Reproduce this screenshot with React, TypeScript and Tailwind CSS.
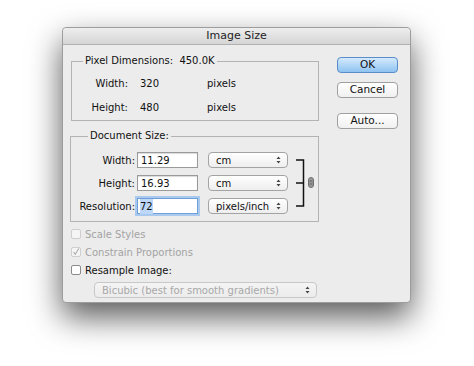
const font = { fontFamily: '"DejaVu Sans", "Liberation Sans", sans-serif' };

function Arrows() {
  return (
    <svg width="5" height="8" viewBox="0 0 5 8" className="shrink-0">
      <path d="M2.5 0.5 L4.5 3 L0.5 3 Z" fill="#444" />
      <path d="M2.5 7.5 L4.5 5 L0.5 5 Z" fill="#444" />
    </svg>
  );
}

function Select({ label, className = "", disabled = false }: { label: string; className?: string; disabled?: boolean }) {
  return (
    <div
      className={`h-[16px] flex items-center justify-between pl-[7px] pr-[6px] rounded-[4px] border bg-gradient-to-b ${
        disabled
          ? "border-[#c8c8c8] from-[#f4f4f4] to-[#ececec] text-[#a8a8a8]"
          : "border-[#a3a3a3] from-white to-[#eeeeee] text-[#111]"
      } ${className}`}
    >
      <span>{label}</span>
      <Arrows />
    </div>
  );
}

function Button({ label, primary = false }: { label: string; primary?: boolean }) {
  return (
    <div
      className={`w-[61px] h-[16px] flex items-center justify-center rounded-[4px] border text-[10.5px] bg-gradient-to-b ${
        primary
          ? "border-[#5b8dc8] from-[#d4eafd] to-[#8fc3f1] text-[#111]"
          : "border-[#a0a0a0] from-white to-[#f0f0f0] text-[#111]"
      }`}
    >
      {label}
    </div>
  );
}

function Checkbox({ label, checked = false, disabled = false }: { label: string; checked?: boolean; disabled?: boolean }) {
  return (
    <div className="h-[14px] flex items-center pl-[1px]">
      <div
        className={`w-[10px] h-[10px] rounded-[2px] border flex items-center justify-center ${
          disabled ? "border-[#cfcfcf] bg-[#f5f5f5]" : "border-[#8c8c8c] bg-white"
        }`}
      >
        {checked && (
          <svg width="10" height="10" viewBox="0 0 10 10">
            <path d="M2 5 L4 8 L8.5 0.5" stroke="#a8a8a8" strokeWidth="1.3" fill="none" />
          </svg>
        )}
      </div>
      <span className={`ml-[4px] ${disabled ? "text-[#a3a3a3]" : "text-[#111]"}`}>{label}</span>
    </div>
  );
}

function Chain() {
  return (
    <svg width="6" height="11" viewBox="0 0 6 11" className="shrink-0">
      <rect x="0.5" y="0.5" width="5" height="10" rx="2.5" fill="#9a9a9a" stroke="#6f6f6f" strokeWidth="1" />
      <path d="M1.5 4 H4.5 M1.5 7 H4.5" stroke="#5f5f5f" strokeWidth="1" />
    </svg>
  );
}

export default function App() {
  return (
    <div className="w-[474px] h-[366px] bg-white pt-[27px] pl-[62px] overflow-hidden text-[10px]" style={font}>
      <div className="w-[349px] h-[276px] bg-[#ececec] rounded-[4px] border border-[#9d9d9d] shadow-[0_14px_32px_rgba(0,0,0,0.65)] flex flex-col">
        {/* Title bar */}
        <div className="h-[17px] flex items-center justify-center rounded-t-[4px] bg-gradient-to-b from-[#eeeeee] to-[#d5d5d5] border-b border-[#b1b1b1] text-[11px] text-[#222]">
          Image Size
        </div>

        <div className="flex pl-[7px]">
          {/* Left column */}
          <div className="w-[249px] pt-[10px] flex flex-col">
            <fieldset className="border border-[#b3b3b3] ml-[1px] pb-[6px]">
              <legend className="ml-[11px] px-[2px] leading-[12px] text-[#111]">Pixel Dimensions:&nbsp; 450.0K</legend>
              <div className="pt-[9px] flex flex-col gap-[10px] text-[#111]">
                <div className="flex h-[14px] items-center">
                  <span className="w-[56px] text-right">Width:</span>
                  <span className="w-[67px] ml-[12px]">320</span>
                  <span>pixels</span>
                </div>
                <div className="flex h-[14px] items-center">
                  <span className="w-[56px] text-right">Height:</span>
                  <span className="w-[67px] ml-[12px]">480</span>
                  <span>pixels</span>
                </div>
              </div>
            </fieldset>

            <fieldset className="border border-[#b3b3b3] mt-[9px] pb-[7px]">
              <legend className="ml-[17px] px-[2px] leading-[12px] text-[#111]">Document Size:</legend>
              <div className="pt-[10px] flex items-start">
                <div className="flex flex-col gap-[7px] text-[#111]">
                  <div className="flex h-[16px] items-center">
                    <span className="w-[64px] text-right">Width:</span>
                    <div className="w-[61px] h-[16px] ml-[2px] border border-[#9a9a9a] bg-white pl-[3px] flex items-center shadow-[inset_0_1px_1px_rgba(0,0,0,0.15)]">11.29</div>
                    <Select label="cm" className="w-[80px] ml-[10px]" />
                  </div>
                  <div className="flex h-[16px] items-center">
                    <span className="w-[64px] text-right">Height:</span>
                    <div className="w-[61px] h-[16px] ml-[2px] border border-[#9a9a9a] bg-white pl-[3px] flex items-center shadow-[inset_0_1px_1px_rgba(0,0,0,0.15)]">16.93</div>
                    <Select label="cm" className="w-[80px] ml-[10px]" />
                  </div>
                  <div className="flex h-[16px] items-center">
                    <span className="w-[64px] text-right">Resolution:</span>
                    <div className="w-[61px] h-[16px] ml-[2px] border border-[#6f9fd8] bg-white pl-[2px] flex items-center shadow-[0_0_0_2px_#a9c9ef]">
                      <span className="bg-[#bcd7f7]">72</span>
                    </div>
                    <Select label="pixels/inch" className="w-[80px] ml-[10px]" />
                  </div>
                </div>
                <svg width="9" height="62" viewBox="0 0 9 62" className="ml-[8px] shrink-0">
                  <path d="M0 8 H7.5 V54 H0 M0 31 H7.5" stroke="#111" strokeWidth="1.5" fill="none" />
                </svg>
                <div className="ml-[3px] mt-[25px]">
                  <Chain />
                </div>
              </div>
            </fieldset>

            <div className="mt-[5px] flex flex-col gap-[4px]">
              <Checkbox label="Scale Styles" disabled />
              <Checkbox label="Constrain Proportions" checked disabled />
              <Checkbox label="Resample Image:" />
            </div>

            <Select label="Bicubic (best for smooth gradients)" disabled className="w-[223px] ml-[24px] mt-[5px]" />
          </div>

          {/* Buttons */}
          <div className="ml-[18px] pt-[12px] flex flex-col">
            <Button label="OK" primary />
            <div className="mt-[9px]">
              <Button label="Cancel" />
            </div>
            <div className="mt-[15px]">
              <Button label="Auto..." />
            </div>
          </div>
        </div>
      </div>
    </div>
  );
}
